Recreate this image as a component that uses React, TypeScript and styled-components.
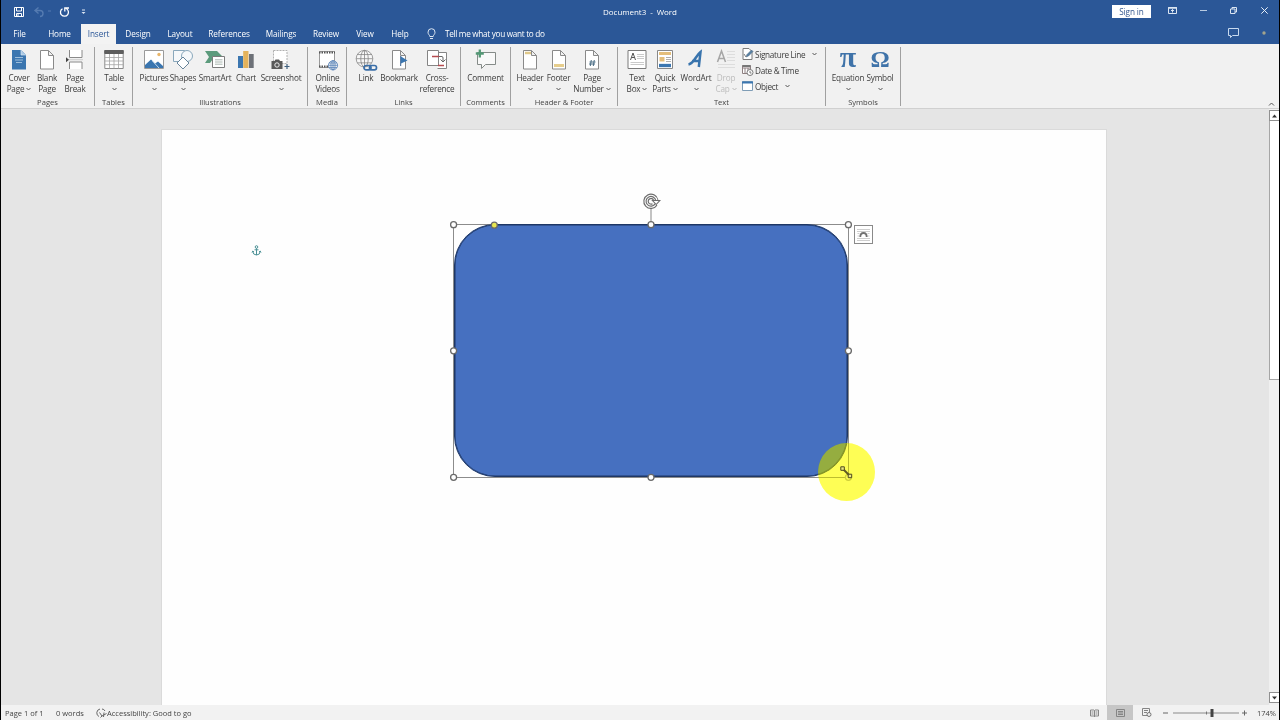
import React from 'react';
import styled, { createGlobalStyle } from 'styled-components';

const Global = createGlobalStyle`
  *{box-sizing:border-box}
  html,body{margin:0;padding:0;background:#000;overflow:hidden}
  svg{display:block;overflow:visible;flex:none}
`;

const Window = styled.div`
  width:1280px;height:720px;padding:0 1px;background:#000;
  display:flex;flex-direction:column;
  font-family:"Open Sans","Noto Sans",sans-serif;font-size:8.2px;color:#444;
  white-space:nowrap;
`;
const TitleBar = styled.header`
  height:24px;background:#2b5797;display:grid;grid-template-columns:1fr auto 1fr;color:#fff;
`;
const QuickAccess = styled.div`display:flex;align-items:center;padding-left:13px;height:23px;`;
const Gap = styled.span<{ $w: number }>`width:${p => p.$w}px;flex:none;`;
const Title = styled.div`line-height:24px;font-size:8px;letter-spacing:-0.06px;white-space:pre;`;
const WindowControls = styled.div`display:flex;justify-content:flex-end;align-items:center;padding-right:11px;height:21px;`;
const SignIn = styled.button`
  width:39px;height:13px;border:0;padding:0;background:#fff;color:#35588f;
  font:inherit;font-size:8.2px;line-height:12px;margin:2px 17px 0 0;letter-spacing:-0.1px;
`;
const TabBar = styled.nav`height:20px;background:#2b5797;display:flex;color:#fff;`;
const Tab = styled.div<{ $w: number; $active?: boolean }>`
  width:${p => p.$w}px;height:20px;line-height:19px;text-align:center;
  letter-spacing:-0.1px;
  background:${p => (p.$active ? '#f3f3f3' : 'transparent')};
  color:${p => (p.$active ? '#2b5797' : '#fff')};
`;
const TellMe = styled.div`display:flex;align-items:center;gap:9px;padding-left:9px;flex:1;height:19px;line-height:19px;letter-spacing:-0.3px;`;
const TabEnd = styled.div`display:flex;align-items:center;gap:23px;padding-right:13px;height:18px;`;

const Ribbon = styled.section`height:65px;background:#f1f1f1;border-bottom:1px solid #d0d0d0;display:flex;padding-top:3px;`;
const GroupBox = styled.div<{ $w: number }>`
  width:${p => p.$w}px;height:59px;border-right:1px solid #a0a0a0;
  display:flex;flex-direction:column;
`;
const Tools = styled.div<{ $pad: number }>`display:flex;flex:none;height:49px;padding:3px 0 0 ${p => p.$pad}px;`;
const GroupName = styled.div`flex:none;text-align:center;line-height:11px;height:11px;font-size:7.6px;padding-top:1px;color:#444;`;
const Tool = styled.div<{ $w: number; $off?: boolean }>`
  width:${p => p.$w}px;flex:none;display:flex;flex-direction:column;align-items:center;
  color:${p => (p.$off ? '#bdbdbd' : '#3c3c3c')};
`;
const IconBox = styled.div`height:21px;display:flex;align-items:flex-start;margin-bottom:1px;`;
const Caption = styled.div`
  line-height:11px;height:11px;display:flex;align-items:center;gap:2px;justify-content:center;
  letter-spacing:-0.2px;
`;
const Glyph = styled.span`
  font-family:"Liberation Serif",serif;font-weight:700;font-size:24px;line-height:19px;height:20px;color:#3f73a9;
`;
const PiGlyph = styled(Glyph)`font-size:30px;line-height:14px;`;
const Stack = styled.div`display:flex;flex-direction:column;padding-left:2px;margin-top:-4px;letter-spacing:-0.3px;color:#3c3c3c;`;
const StackRow = styled.div`display:flex;align-items:center;height:16px;gap:2px;`;
const StackText = styled.span<{ $w: number }>`width:${p => p.$w}px;`;
const RibbonEnd = styled.div`flex:1;display:flex;justify-content:flex-end;align-items:flex-end;padding:0 5px 2px 0;`;

const Workspace = styled.main`flex:1;min-height:0;background:#e5e5e5;display:flex;`;
const Desk = styled.div`flex:1;padding:21px 0 0 161px;overflow:hidden;`;
const Sheet = styled.div`position:relative;width:944px;height:590px;background:#fefefe;box-shadow:0 0 0 1px #dadada;`;
const ScrollBar = styled.div`width:10px;background:#f0f0f0;display:flex;flex-direction:column;padding:1px 0 2px;`;
const ScrollButton = styled.div`height:11px;background:#fff;border:1px solid #909090;border-right:0;display:flex;align-items:center;justify-content:center;flex:none;`;
const Thumb = styled.div`height:259px;background:#fff;border:1px solid #a6a6a6;border-top:0;border-right:0;margin-bottom:auto;`;

const Shape = styled.div`
  position:absolute;left:292px;top:94px;width:394px;height:253px;
  background:#4670c0;border:1px solid #1e3765;border-radius:41px;
  box-shadow:inset 0 0 0 .5px #1e3765;
`;
const Selection = styled.div`position:absolute;left:291px;top:94px;width:396px;height:254px;border:1px solid #8c8c8c;`;
const HaloTint = styled.div`
  position:absolute;left:656px;top:313px;width:57px;height:58px;border-radius:50%;
  background:rgba(255,255,0,.43);filter:blur(.7px);
`;
const HaloGlow = styled(HaloTint)`background:rgb(255,255,150);mix-blend-mode:multiply;`;
const Floating = styled.div<{ $x: number; $y: number }>`position:absolute;left:${p => p.$x}px;top:${p => p.$y}px;`;
const LayoutOptions = styled.div`
  position:absolute;left:692px;top:95px;width:19px;height:19px;background:#fff;border:1px solid #8a8a8a;
  display:flex;align-items:center;justify-content:center;
`;

const StatusBar = styled.footer`height:15px;background:#f2f2f2;display:flex;align-items:center;font-size:7.5px;padding-left:4px;color:#444;`;
const StatusText = styled.span<{ $w?: number }>`
  width:${p => (p.$w ? p.$w + 'px' : 'auto')};line-height:14px;
`;
const StatusRight = styled.div`margin-left:auto;display:flex;align-items:center;height:15px;`;
const ViewButton = styled.div<{ $on?: boolean }>`
  width:26px;height:15px;display:flex;align-items:center;justify-content:center;
  background:${p => (p.$on ? '#c6c6c6' : 'transparent')};
`;

const Chevron = ({ up = false, color = '#555' }: { up?: boolean; color?: string }) => (
  <svg width="5" height="4" viewBox="0 0 5 4" fill="none" stroke={color} strokeWidth="1">
    <path d={up ? 'M0 3.500 2.500 1 5 3.500' : 'M.5 1 2.500 3 4.500 1'} />
  </svg>
);

const Icon = ({ children, w = 20, h = 20 }: { children: React.ReactNode; w?: number; h?: number }) => (
  <svg width={w} height={h} viewBox={`0 0 ${w} ${h}`} fill="none" stroke="#7b7b7b" strokeWidth="1">
    {children}
  </svg>
);

const SheetOutline = () => <path d="M3.500.5h8l5 5v13.500h-13zM11.500.5v5h5" fill="#fff" stroke="#8a8a8a" />;
const Globe = ({ x, y, r, color }: { x: number; y: number; r: number; color: string }) => (
  <g transform={`translate(${x} ${y})`} stroke={color} strokeWidth=".8">
    <circle r={r} fill="#f8f8f8" />
    <ellipse rx={r * 0.45} ry={r} />
    <path d={`M${-r} 0H${r}M0 ${-r}V${r}M${-r * 0.86} ${-r * 0.5}H${r * 0.86}M${-r * 0.86} ${r * 0.5}H${r * 0.86}`} />
  </g>
);

const icons = {
  cover: <Icon><path d="M3 0h9l5 5v14.500H3z" fill="#3b76b0" stroke="none" /><path d="M12 0v5h5" fill="#a9c8e4" stroke="#d6e5f2" strokeWidth=".7" /><path d="M6 7.500h8M6 10h8M7 12.500h6" stroke="#a9c6e0" strokeWidth=".9" /></Icon>,
  blank: <Icon><SheetOutline /></Icon>,
  pageBreak: <Icon><path d="M4.500 0v7.500h12.500V0M4.500 19v-7h12.500v7" fill="#fff" stroke="#8a8a8a" /><path d="M4 9.700h14" stroke="#bbb" strokeWidth=".7" /><path d="M1 7.200v5l3-2.500z" fill="#444" stroke="none" /></Icon>,
  table: <Icon><path d="M.8.5h18.400v18H.8z" fill="#fff" stroke="#8a8a8a" /><path d="M.8.5h18.400v3H.8z" fill="#5e5e5e" stroke="#5e5e5e" /><path d="M1 7.500h18M1 11h18M1 14.700h18M5.500 4v14.500M10 4v14.500M14.500 4v14.500" stroke="#a5a5a5" strokeWidth=".8" /></Icon>,
  pictures: <Icon><path d="M.5.5h19v18H.5z" fill="#fff" stroke="#9a9a9a" /><path d="M1 18v-3l6-5.500 4 4 3-2 5 4.500v2H1z" fill="#3b76b0" stroke="none" /><path d="m8.500 11 6.500 7" stroke="#e4edf5" strokeWidth=".8" /><circle cx="15" cy="4.500" r="1.700" fill="#e9b66a" stroke="none" /></Icon>,
  shapes: <Icon><path d="M.5.5h11v11H.5z" fill="#f6f8fa" stroke="#8aa8bc" /><circle cx="14" cy="6" r="5.500" fill="#f6f8fa" stroke="#8aa8bc" /><path d="m10 7 6 6-6 6-6-6z" fill="#fff" stroke="#67849a" /></Icon>,
  smartArt: <Icon><path d="M0 1h12l5 5-3 3H8l-3 4H0l4-6z" fill="#5c9b7c" stroke="none" /><path d="M7.500 6.500h12v11h-12z" fill="#fff" /><path d="M10 9.800h7.500M10 12h7.500M10 14.200h7.500" stroke="#a9b5ae" /></Icon>,
  chart: <Icon w={16}><path d="M0 6h5v12H0z" fill="#3b76b0" stroke="none" /><path d="M5.200 1h5.300v17H5.200z" fill="#e4b35c" stroke="none" /><path d="M11 4h4.700v14H11z" fill="#6d7178" stroke="none" /></Icon>,
  screenshot: <Icon><path d="M2.500.5h13.500v13h-13.500z" fill="#fff" stroke="#b0b0b0" strokeDasharray="2 1" /><path d="M.5 11h3l1-1.500h3.500L9 11h2.500v8H.5z" fill="#5a5a5a" stroke="none" /><circle cx="6" cy="15" r="2.200" fill="#5a5a5a" stroke="#eee" /><path d="M16 14v5M13.500 16.500h5" stroke="#41617f" strokeWidth="1.200" /></Icon>,
  videos: <Icon><path d="M1.500 1.500h15v16h-15z" fill="#fff" stroke="#999" /><path d="M1 2.500h16M1 16.500h10" stroke="#555" strokeWidth="2" strokeDasharray="1.500 1" /><Globe x={15} y={15.300} r={4.600} color="#527eb5" /></Icon>,
  link: <Icon><Globe x={8.500} y={8.700} r={8.300} color="#858585" /><g stroke="#3b6fa8" strokeWidth="1.700"><rect x="8" y="15.500" width="7" height="4.300" rx="2.100" /><rect x="13.500" y="15.500" width="7" height="4.300" rx="2.100" /></g></Icon>,
  bookmark: <Icon><SheetOutline /><path d="M11.700 6v10" stroke="#365f91" /><path d="M12 6.500 18.500 10.500l-6.500 3z" fill="#3b76b0" stroke="none" /></Icon>,
  cross: <Icon><path d="M.5.5h11v15H.5zM11.500 2.500h8v16h-9" fill="#fff" stroke="#858585" /><path d="M5 6.500h7M11 15.500h6" stroke="#b64c50" strokeWidth="1.700" /><path d="M12 6.500h3q1 0 1 1.500v4m-2.500-2.500 2.500 2.500 2.500-2.500" stroke="#666" /></Icon>,
  comment: <Icon><path d="M1.500 2.500h18v12h-10l-4 4v-4H1.500z" fill="#f9f9f9" stroke="#858b88" /><path d="M3.800-.5v8M-.2 3.500h8" stroke="#539875" strokeWidth="2.300" /></Icon>,
  header: <Icon><SheetOutline /><path d="M5 3h6" stroke="#e0c98a" strokeWidth="2.500" /></Icon>,
  footer: <Icon><SheetOutline /><path d="M5 15.500h10" stroke="#e6cd8c" strokeWidth="3" /></Icon>,
  pageNo: <Icon><SheetOutline /><path d="m9.300 10-1 6m4-6-1 6m-3.800-4h6m-6.500 2h6" stroke="#4c6f86" strokeWidth="1" /></Icon>,
  textBox: <Icon><path d="M1 .5h18v18H1z" fill="#fff" /><path d="m3.500 10 2.500-7 2.500 7M4.500 7.500h3" stroke="#555" strokeWidth="1" /><path d="M10 4.500h7M10 6.500h7M10 8.500h7M3.500 12.500h13.500M3.500 14.500h13.500" stroke="#bcbcbc" strokeWidth=".8" /></Icon>,
  quick: <Icon w={16}><path d="M.5.5h15v18H.5z" fill="#fff" stroke="#888" /><path d="M2 3.500h12" stroke="#e4be7b" strokeWidth="3" /><path d="M2.500 7h5v4.500h-5z" fill="#e4be7b" stroke="none" /><path d="M9 7.500h5M9 9.500h5M9 11.500h5" stroke="#999" strokeWidth=".8" /><path d="M2 15.500h12" stroke="#3b76b0" strokeWidth="3.300" /></Icon>,
  wordArt: <Icon><path d="M2.500 14.500C8 13.500 9.500 6 14.500 2L12.800 17M6 11h8" stroke="#3974ad" strokeWidth="2.500" /></Icon>,
  dropCap: <Icon><path d="m1.500 12 4-11 4 11M3 8.500h5" stroke="#a6a6a6" strokeWidth="1.500" /><path d="M11 1.500h8M11 4.500h8M11 7.500h8M11 10.500h8M2 14.500h17M2 17.500h17" stroke="#ddd" /></Icon>,
  equation: <PiGlyph>π</PiGlyph>,
  symbol: <Glyph>Ω</Glyph>,
};

type ToolSpec = { w: number; icon: React.ReactNode; a: string; b?: string; drop?: boolean; off?: boolean };
const Command = ({ w, icon, a, b, drop, off }: ToolSpec) => (
  <Tool $w={w} $off={off}>
    <IconBox>{icon}</IconBox>
    <Caption>{a}</Caption>
    <Caption>{b}{drop && <Chevron color={off ? '#bbb' : '#555'} />}</Caption>
  </Tool>
);

type GroupSpec = { name: string; w: number; pad: number; tools: ToolSpec[]; extra?: React.ReactNode };

const textExtras = (
  <Stack>
    <StackRow>
      <Icon w={11} h={12}><path d="M1 .5h6l3 3v8H1z" fill="#fff" /><path d="m4 9 1-2.500L9.500 2l1.500 1.500L6.500 8z" fill="#557fa2" stroke="#56728b" strokeWidth=".6" /><path d="m2 6 2 3" /></Icon>
      <StackText $w={55}>Signature Line</StackText><Chevron />
    </StackRow>
    <StackRow>
      <Icon w={11} h={12}><path d="M.5 1.500h8v8h-8zM.5 4h8M3 4v5M6 4v5" fill="#fff" stroke="#8d7f80" /><path d="M.5 2h8" stroke="#777" strokeWidth="2" /><circle cx="8" cy="8.500" r="3" fill="#fff" /><path d="M8 7v2h1.500" /></Icon>
      <StackText $w={55}>Date &amp; Time</StackText>
    </StackRow>
    <StackRow>
      <Icon w={11} h={12}><path d="M.5 1.500h10v9H.5z" fill="#fff" stroke="#7f9db6" /><path d="M0 2.500h11" stroke="#3b76b0" strokeWidth="2" /></Icon>
      <StackText $w={28}>Object</StackText><Chevron />
    </StackRow>
  </Stack>
);

const groups: GroupSpec[] = [
  { name: 'Pages', w: 94, pad: 4, tools: [
    { w: 28, icon: icons.cover, a: 'Cover', b: 'Page', drop: true },
    { w: 28, icon: icons.blank, a: 'Blank', b: 'Page' },
    { w: 28, icon: icons.pageBreak, a: 'Page', b: 'Break' }] },
  { name: 'Tables', w: 38, pad: 0, tools: [{ w: 38, icon: icons.table, a: 'Table', drop: true }] },
  { name: 'Illustrations', w: 175, pad: 5, tools: [
    { w: 32, icon: icons.pictures, a: 'Pictures', drop: true },
    { w: 26, icon: icons.shapes, a: 'Shapes', drop: true },
    { w: 38, icon: icons.smartArt, a: 'SmartArt' },
    { w: 24, icon: icons.chart, a: 'Chart' },
    { w: 46, icon: icons.screenshot, a: 'Screenshot', drop: true }] },
  { name: 'Media', w: 39, pad: 0, tools: [{ w: 39, icon: icons.videos, a: 'Online', b: 'Videos' }] },
  { name: 'Links', w: 114, pad: 5, tools: [
    { w: 28, icon: icons.link, a: 'Link' },
    { w: 38, icon: icons.bookmark, a: 'Bookmark' },
    { w: 38, icon: icons.cross, a: 'Cross-', b: 'reference' }] },
  { name: 'Comments', w: 50, pad: 0, tools: [{ w: 49, icon: icons.comment, a: 'Comment' }] },
  { name: 'Header & Footer', w: 107, pad: 4, tools: [
    { w: 30, icon: icons.header, a: 'Header', drop: true },
    { w: 27, icon: icons.footer, a: 'Footer', drop: true },
    { w: 40, icon: icons.pageNo, a: 'Page', b: 'Number', drop: true }] },
  { name: 'Text', w: 208, pad: 6, extra: textExtras, tools: [
    { w: 26, icon: icons.textBox, a: 'Text', b: 'Box', drop: true },
    { w: 30, icon: icons.quick, a: 'Quick', b: 'Parts', drop: true },
    { w: 32, icon: icons.wordArt, a: 'WordArt', drop: true },
    { w: 28, icon: icons.dropCap, a: 'Drop', b: 'Cap', drop: true, off: true }] },
  { name: 'Symbols', w: 75, pad: 6, tools: [
    { w: 32, icon: icons.equation, a: 'Equation', drop: true },
    { w: 32, icon: icons.symbol, a: 'Symbol', drop: true }] },
];

const tabs: [string, number][] = [
  ['File', 37], ['Home', 43], ['Insert', 35], ['Design', 44], ['Layout', 40],
  ['References', 58], ['Mailings', 46], ['Review', 44], ['View', 34], ['Help', 36],
];

const handles: [number, number][] = [
  [291.6, 94.7], [489, 94.7], [686.4, 94.7], [291.6, 220.8], [686.4, 220.8], [291.6, 347.3], [489, 347.3],
];

export default function App() {
  return (
    <Window>
      <Global />
      <TitleBar>
        <QuickAccess>
          <Icon w={10} h={10}><path d="M.5.5h9v9h-9z" stroke="#fff" /><path d="M2.500.5v3.500h5V.5M2.500 9.500V6.500h5v3" stroke="#fff" /><path d="M4 7v2" stroke="#fff" /></Icon>
          <Gap $w={10} />
          <Icon w={10} h={10}><path d="M4.500.5 1 3.500l3.500 3M1.500 3.500H6q3 0 3 3T6 9.500" stroke="#557bb1" strokeWidth="1.400" /></Icon>
          <Gap $w={4} />
          <Icon w={3} h={3}><path d="M0 1h3" stroke="#557bb1" /></Icon>
          <Gap $w={9} />
          <Icon w={10} h={10}><path d="M2.500 1.700A4 4 0 1 0 6 1.500M4.800 4.500V1H9" stroke="#fff" strokeWidth="1.300" /></Icon>
          <Gap $w={11} />
          <Icon w={5} h={6}><path d="M1 1h3" stroke="#dce6f2" /><path d="M.5 3h4l-2 2z" fill="#dce6f2" stroke="none" /></Icon>
        </QuickAccess>
        <Title>Document3  -  Word</Title>
        <WindowControls>
          <SignIn>Sign in</SignIn>
          <Icon w={9} h={7}><path d="M.5.5h8v6h-8z" stroke="#dce6f2" /><path d="M0 1h9" stroke="#dce6f2" strokeWidth="1.500" /><path d="M4.500 5.500v-3M3 4l1.500-1.500L6 4" stroke="#dce6f2" /></Icon>
          <Gap $w={23} />
          <Icon w={7} h={7}><path d="M0 3.500h7" stroke="#b9cbe2" /></Icon>
          <Gap $w={23} />
          <Icon w={7} h={7}><path d="M.5 2h4.500v4.500H.5zM2 2V.5h4.500V5H5" stroke="#dce6f2" /></Icon>
          <Gap $w={24} />
          <Icon w={7} h={7}><path d="m.3.3 6.400 6.400m0-6.400L.3 6.700" stroke="#e8eff8" /></Icon>
        </WindowControls>
      </TitleBar>
      <TabBar>
        {tabs.map(([t, w]) => <Tab key={t} $w={w} $active={t === 'Insert'}>{t}</Tab>)}
        <TellMe>
          <Icon w={9} h={12}><path d="M2.800 8.500C2.800 7 1 6.500 1 4.200a3.500 3.500 0 0 1 7 0C8 6.500 6.200 7 6.200 8.500zM3 10.500h3" stroke="#dce6f2" /></Icon>
          Tell me what you want to do
        </TellMe>
        <TabEnd>
          <Icon w={11} h={10}><path d="M.5.5h10v7h-6L2.500 9.500v-2h-2z" stroke="#c8daef" /></Icon>
          <Icon w={4} h={4}><circle cx="2" cy="2" r="1.700" fill="#a3a48d" stroke="none" /></Icon>
        </TabEnd>
      </TabBar>
      <Ribbon>
        {groups.map(g => (
          <GroupBox key={g.name} $w={g.w}>
            <Tools $pad={g.pad}>{g.tools.map(t => <Command key={t.a} {...t} />)}{g.extra}</Tools>
            <GroupName>{g.name}</GroupName>
          </GroupBox>
        ))}
        <RibbonEnd><Chevron up /></RibbonEnd>
      </Ribbon>
      <Workspace>
        <Desk>
          <Sheet>
            <Floating $x={90} $y={115}>
              <Icon w={9} h={11}><g stroke="#4d9297"><circle cx="4.500" cy="2" r="1.300" /><path d="M4.500 3.300V10M2.500 4.800h4M.7 6.300q.3 3.700 3.800 3.700t3.800-3.700M0 7.500l.8-1.500L2 7M9 7.500 8.200 6 7 7" /></g></Icon>
            </Floating>
            <Selection />
            <Shape />
            <Floating $x={0} $y={0}>
              <Icon w={944} h={575}>
                <path d="M489 77v14.500" stroke="#888" />
                <g stroke="#6a6a6a" strokeWidth="1.300">
                  {handles.map(([x, y]) => <circle key={`${x}-${y}`} cx={x} cy={y} r="3" fill="#fff" />)}
                  <circle cx="332.300" cy="95.200" r="3" fill="#e8e750" />
                  <circle cx="686.400" cy="347.300" r="3" fill="#fff" stroke="#aaa" />
                </g>
                <g transform="translate(489 71)">
                  <path d="M5 3.500A6 6 0 1 1 5.800-1" stroke="#6c6c6c" strokeWidth="3.400" />
                  <path d="M1.500 2.700A2.800 2.800 0 1 1 2.500-1" stroke="#6c6c6c" strokeWidth="1.200" />
                  <path d="M5.300 3A6 6 0 1 1 5.900-.5" stroke="#fff" strokeWidth="1.100" />
                  <path d="M1.500-.5h7.300L5.200 3.500z" fill="#fff" stroke="#6c6c6c" strokeWidth="1.100" />
                </g>
              </Icon>
            </Floating>
            <LayoutOptions>
              <Icon w={13} h={13}><path d="M0 1.500h13M0 3.500h13M0 10.500h13M0 12.500h13M.5 5.500h2M.5 8h2M10.500 5.500h2M10.500 8h2" stroke="#c2c2c2" strokeWidth=".8" /><path d="M3.300 9q0-4 3.200-4T9.700 9" stroke="#707070" strokeWidth="1.800" /></Icon>
            </LayoutOptions>
            <HaloTint />
            <HaloGlow />
            <Floating $x={678} $y={336}>
              <Icon w={13} h={13}><path d="m3 3 7 7" stroke="#5f5a23" strokeWidth="2" /><path d="M.8.8h3.500v3.500H.8zM8.200 8.200h3.500v3.500H8.200z" fill="#ece883" stroke="#4e491f" /></Icon>
            </Floating>
          </Sheet>
        </Desk>
        <ScrollBar>
          <ScrollButton><Icon w={5} h={4}><path d="M0 3.500 2.500.5 5 3.500z" fill="#333" stroke="none" /></Icon></ScrollButton>
          <Thumb />
          <ScrollButton><Icon w={5} h={4}><path d="M0 .5h5L2.500 3.500z" fill="#333" stroke="none" /></Icon></ScrollButton>
        </ScrollBar>
      </Workspace>
      <StatusBar>
        <StatusText $w={51}>Page 1 of 1</StatusText>
        <StatusText $w={40}>0 words</StatusText>
        <Icon w={11} h={10}><path d="M4 1A4 4 0 0 0 3 8.500M6 1q2 0 3 2M3.500 4.500 6 8l4.500-2.500M6 8l-1.500 1.500M8 4.500 7.500 9" stroke="#666" /></Icon>
        <StatusText>Accessibility: Good to go</StatusText>
        <StatusRight>
          <ViewButton><Icon w={9} h={8}><path d="M.5 1h3.500l.5.500.5-.500h3.500v6H.5zM4.500 1.500V8M1.500 3h2M1.500 5h2M5.500 3h2M5.500 5h2" stroke="#858585" /></Icon></ViewButton>
          <ViewButton $on><Icon w={9} h={8}><path d="M.5.5h8v7h-8zM2 2.500h5M2 4h5M2 5.500h5" stroke="#858585" /></Icon></ViewButton>
          <ViewButton><Icon w={9} h={9}><path d="M.5.5h7v7h-7zM2 2.500h4M2 4.500h3" stroke="#858585" /><circle cx="7" cy="6.500" r="2" fill="#eee" stroke="#777" /></Icon></ViewButton>
          <Gap $w={4} />
          <Icon w={86} h={8}><path d="M0 4h5" stroke="#666" /><path d="M10 4h66" stroke="#8a8a8a" /><path d="M43.500 2.500v3" stroke="#777" /><path d="M47.500 0h3v8h-3z" fill="#444" stroke="none" /><path d="M79 4h5M81.500 1.500v5" stroke="#666" /></Icon>
          <Gap $w={8} />
          <StatusText $w={22}>174%</StatusText>
        </StatusRight>
      </StatusBar>
    </Window>
  );
}
